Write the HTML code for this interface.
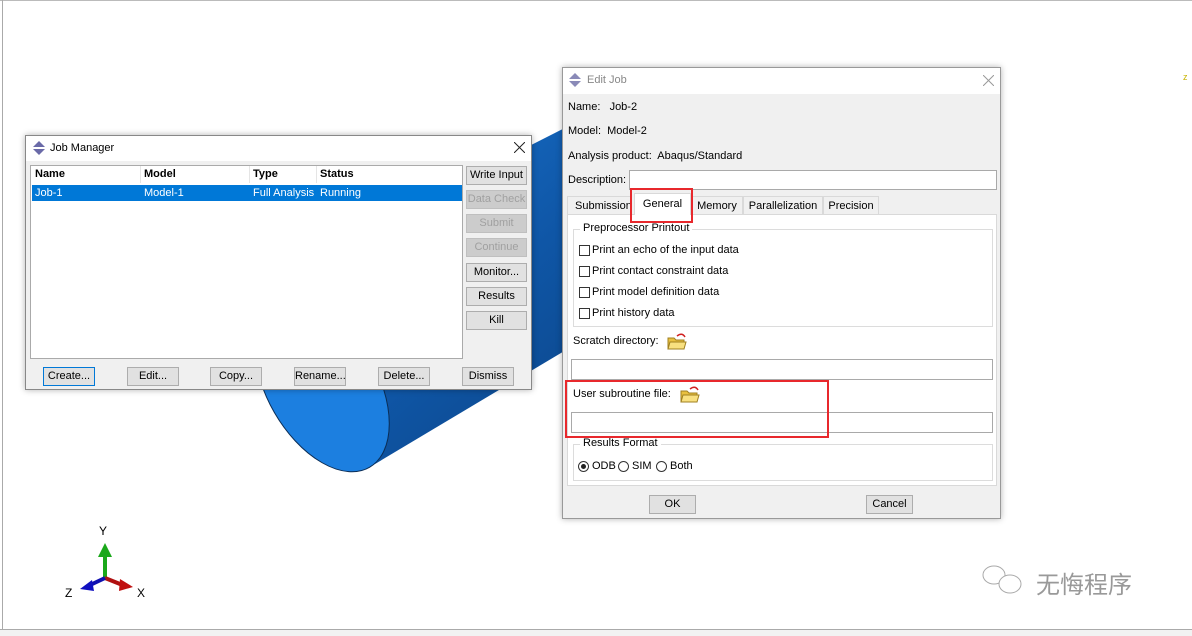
<!DOCTYPE html>
<html><head><meta charset="utf-8"><style>
*{box-sizing:border-box;margin:0;padding:0}
body{width:1192px;height:636px;overflow:hidden;background:#fff;font-family:"Liberation Sans","Noto Sans CJK SC",sans-serif;font-size:11px;color:#000;position:relative}
.a{position:absolute}
.btn{position:absolute;background:#e1e1e1;border:1px solid #adadad;text-align:center;font-size:11px;line-height:17px;height:19px}
.dis{color:#a0a0a0;background:#ccc;border-color:#bfbfbf}
.inp{position:absolute;background:#fff;border:1px solid #a9a9a9}
.cb{position:absolute;width:11px;height:11px;border:1px solid #333;background:#fff}
.grp{position:absolute;border:1px solid #dcdcdc}
.lg{position:absolute;background:#fff;padding:0 3px;top:-8px;left:6px}
.rb{position:absolute;width:11px;height:11px;border:1px solid #333;border-radius:50%;background:#fff}
</style></head><body>
<div class="a" style="left:0;top:0;width:1192px;height:1px;background:#bbb"></div>
<div class="a" style="left:2px;top:0;width:1px;height:630px;background:#aaa"></div>
<div class="a" style="left:0;top:629px;width:1192px;height:1px;background:#aaa"></div>
<div class="a" style="left:0;top:630px;width:1192px;height:6px;background:#f2f2f2"></div>
<svg class="a" style="left:0;top:0" width="1192" height="636">
<defs><linearGradient id="g" x1="0" y1="0" x2="1" y2="1"><stop offset="0" stop-color="#1b7ad8"/><stop offset="0.5" stop-color="#0f56a6"/><stop offset="1" stop-color="#0a3d7a"/></linearGradient></defs>
<polygon points="300,262 620,100 700,270 370,467" fill="url(#g)"/>
<ellipse cx="322" cy="385" rx="95" ry="55" transform="rotate(60 322 385)" fill="#1c7fe0" stroke="#0b2d55" stroke-width="1"/>
<text x="1183" y="80" font-size="9" fill="#c8b400" font-family="Liberation Sans">z</text>
<line x1="105" y1="578" x2="105" y2="556" stroke="#1aa81a" stroke-width="4"/><polygon points="98,557 112,557 105,543" fill="#1aa81a"/>
<line x1="105" y1="578" x2="125" y2="586" stroke="#b01010" stroke-width="4"/><polygon points="120,579 133,587 119,591" fill="#c01010"/>
<line x1="105" y1="578" x2="88" y2="586" stroke="#1010b0" stroke-width="4"/><polygon points="92,580 80,589 94,591" fill="#1010c0"/>
<text x="99" y="535" font-size="12" font-family="Liberation Sans">Y</text>
<text x="65" y="597" font-size="12" font-family="Liberation Sans">Z</text>
<text x="137" y="597" font-size="12" font-family="Liberation Sans">X</text>
<g fill="none" stroke="#aaa" stroke-width="1"><ellipse cx="994" cy="575" rx="11" ry="9"/><ellipse cx="1010" cy="584" rx="11" ry="9" fill="#fff"/></g>
<text x="1036" y="593" font-size="24" fill="#999" font-family="Noto Sans CJK SC,sans-serif">无悔程序</text>
</svg>

<!-- Job Manager -->
<div class="a" style="left:25px;top:135px;width:507px;height:255px;background:#f0f0f0;border:1px solid #888;box-shadow:0 0 6px rgba(0,0,0,.3)">
<div class="a" style="left:0;top:0;width:505px;height:25px;background:#fff"></div>
<svg class="a" style="left:6px;top:5px" width="14" height="14"><polygon points="7,0 13,6 1,6" fill="#6a6aa8"/><polygon points="7,14 13,8 1,8" fill="#6a6aa8"/></svg>
<div class="a" style="left:24px;top:6px;font-size:11px">Job Manager</div>
<svg class="a" style="left:488px;top:6px" width="11" height="11"><path d="M0 0L11 11M11 0L0 11" stroke="#222" stroke-width="1"/></svg>
<div class="a" style="left:4px;top:29px;width:433px;height:194px;background:#fff;border:1px solid #aaa">
<div class="a" style="left:0;top:0;width:431px;height:17px;font-weight:bold;line-height:17px">
<span class="a" style="left:4px">Name</span><span class="a" style="left:113px">Model</span><span class="a" style="left:222px">Type</span><span class="a" style="left:289px">Status</span>
<div class="a" style="left:109px;top:0;width:1px;height:17px;background:#e5e5e5"></div><div class="a" style="left:218px;top:0;width:1px;height:17px;background:#e5e5e5"></div><div class="a" style="left:285px;top:0;width:1px;height:17px;background:#e5e5e5"></div></div>
<div class="a" style="left:1px;top:19px;width:430px;height:16px;background:#0078d7;color:#fff;line-height:16px">
<span class="a" style="left:3px">Job-1</span><span class="a" style="left:112px">Model-1</span><span class="a" style="left:221px">Full Analysis</span><span class="a" style="left:288px">Running</span></div>
</div>
<div class="btn" style="left:440px;top:30px;width:61px">Write Input</div>
<div class="btn dis" style="left:440px;top:54px;width:61px">Data Check</div>
<div class="btn dis" style="left:440px;top:78px;width:61px">Submit</div>
<div class="btn dis" style="left:440px;top:102px;width:61px">Continue</div>
<div class="btn" style="left:440px;top:127px;width:61px">Monitor...</div>
<div class="btn" style="left:440px;top:151px;width:61px">Results</div>
<div class="btn" style="left:440px;top:175px;width:61px">Kill</div>
<div class="btn" style="left:17px;top:231px;width:52px;border:1px solid #0078d7">Create...</div>
<div class="btn" style="left:101px;top:231px;width:52px">Edit...</div>
<div class="btn" style="left:184px;top:231px;width:52px">Copy...</div>
<div class="btn" style="left:268px;top:231px;width:52px">Rename...</div>
<div class="btn" style="left:352px;top:231px;width:52px">Delete...</div>
<div class="btn" style="left:436px;top:231px;width:52px">Dismiss</div>
</div>

<!-- Edit Job -->
<div class="a" style="left:562px;top:67px;width:439px;height:452px;background:#f0f0f0;border:1px solid #999;box-shadow:0 0 6px rgba(0,0,0,.3)">
<div class="a" style="left:0;top:0;width:437px;height:26px;background:#fff"></div>
<svg class="a" style="left:5px;top:5px" width="14" height="14"><polygon points="7,0 13,6 1,6" fill="#8a8ab8"/><polygon points="7,14 13,8 1,8" fill="#8a8ab8"/></svg>
<div class="a" style="left:24px;top:6px;color:#888">Edit Job</div>
<svg class="a" style="left:420px;top:7px" width="11" height="11"><path d="M0 0L11 11M11 0L0 11" stroke="#999" stroke-width="1"/></svg>
<div class="a" style="left:5px;top:33px">Name:&nbsp;&nbsp; Job-2</div>
<div class="a" style="left:5px;top:57px">Model:&nbsp; Model-2</div>
<div class="a" style="left:5px;top:82px">Analysis product:&nbsp; Abaqus/Standard</div>
<div class="a" style="left:5px;top:106px">Description:</div>
<div class="inp" style="left:66px;top:102px;width:368px;height:20px"></div>
<div class="a" style="left:4px;top:146px;width:430px;height:272px;background:#fff;border:1px solid #d9d9d9"></div>
<div class="a" style="left:4px;top:128px;width:65px;height:19px;border:1px solid #d9d9d9;line-height:18px;padding-left:7px">Submission</div>
<div class="a" style="left:71px;top:125px;width:57px;height:22px;background:#fff;border:1px solid #d9d9d9;border-bottom:none;line-height:20px;text-align:center">General</div>
<div class="a" style="left:128px;top:128px;width:52px;height:19px;border:1px solid #d9d9d9;line-height:18px;text-align:center">Memory</div>
<div class="a" style="left:180px;top:128px;width:80px;height:19px;border:1px solid #d9d9d9;line-height:18px;text-align:center">Parallelization</div>
<div class="a" style="left:260px;top:128px;width:56px;height:19px;border:1px solid #d9d9d9;line-height:18px;text-align:center">Precision</div>
<div class="grp" style="left:10px;top:161px;width:420px;height:98px"><span class="lg">Preprocessor Printout</span></div>
<div class="cb" style="left:16px;top:177px"></div><div class="a" style="left:29px;top:176px">Print an echo of the input data</div>
<div class="cb" style="left:16px;top:198px"></div><div class="a" style="left:29px;top:197px">Print contact constraint data</div>
<div class="cb" style="left:16px;top:219px"></div><div class="a" style="left:29px;top:218px">Print model definition data</div>
<div class="cb" style="left:16px;top:240px"></div><div class="a" style="left:29px;top:239px">Print history data</div>
<div class="a" style="left:10px;top:267px">Scratch directory:</div>
<svg class="a" style="left:104px;top:264px" width="20" height="18"><path d="M1 6h6l2 2h8v9H1z" fill="#e8c040" stroke="#a08020"/><path d="M3 10h16l-2 7H1z" fill="#f8e080" stroke="#a08020"/><path d="M10 4q5-4 8 1" fill="none" stroke="#d02020" stroke-width="1.5"/></svg>
<div class="inp" style="left:8px;top:291px;width:422px;height:21px"></div>
<div class="a" style="left:10px;top:320px">User subroutine file:</div>
<svg class="a" style="left:117px;top:317px" width="20" height="18"><path d="M1 6h6l2 2h8v9H1z" fill="#e8c040" stroke="#a08020"/><path d="M3 10h16l-2 7H1z" fill="#f8e080" stroke="#a08020"/><path d="M10 4q5-4 8 1" fill="none" stroke="#d02020" stroke-width="1.5"/></svg>
<div class="inp" style="left:8px;top:344px;width:422px;height:21px"></div>
<div class="grp" style="left:10px;top:376px;width:420px;height:37px"><span class="lg">Results Format</span></div>
<div class="rb" style="left:15px;top:393px"><div class="a" style="left:2px;top:2px;width:5px;height:5px;border-radius:50%;background:#222"></div></div><div class="a" style="left:29px;top:392px">ODB</div>
<div class="rb" style="left:55px;top:393px"></div><div class="a" style="left:69px;top:392px">SIM</div>
<div class="rb" style="left:93px;top:393px"></div><div class="a" style="left:107px;top:392px">Both</div>
<div class="btn" style="left:86px;top:427px;width:47px">OK</div>
<div class="btn" style="left:303px;top:427px;width:47px">Cancel</div>
</div>
<div class="a" style="left:630px;top:188px;width:63px;height:35px;border:2px solid #e8282c"></div>
<div class="a" style="left:565px;top:380px;width:264px;height:58px;border:2px solid #e8282c"></div>
</body></html>
